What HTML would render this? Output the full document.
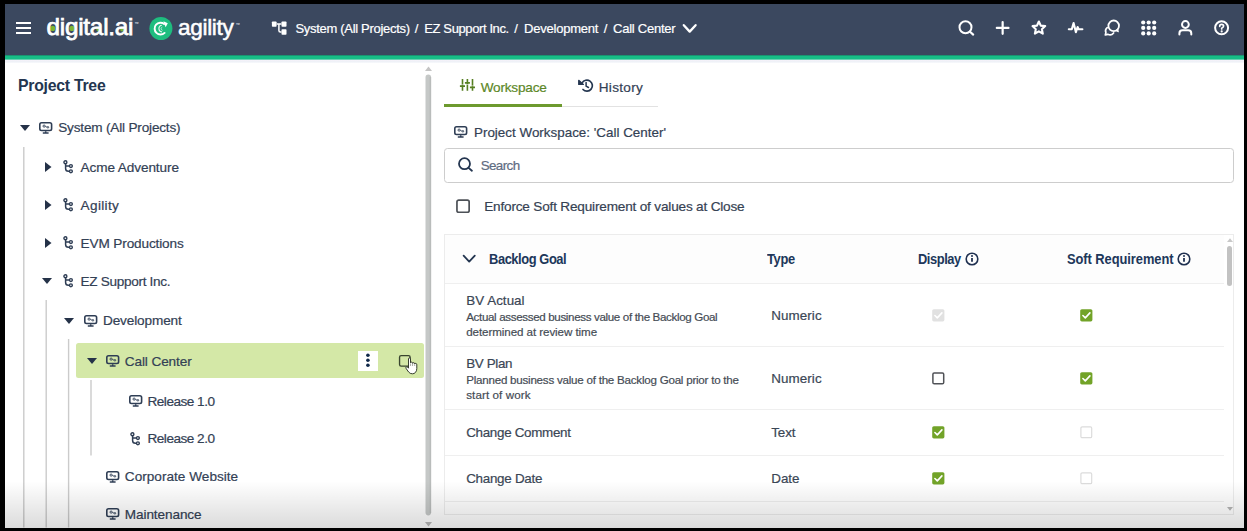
<!DOCTYPE html>
<html lang="en">
<head>
<meta charset="utf-8">
<title>Project Workspace - Call Center</title>
<style>
html,body{margin:0;padding:0;}
body{width:1247px;height:531px;background:#000;overflow:hidden;position:relative;font-family:"Liberation Sans",sans-serif;}
.a{position:absolute;}
.t{position:absolute;white-space:nowrap;line-height:1;-webkit-text-stroke:0.2px currentColor;}
.b{-webkit-text-stroke:0;}
.ag{-webkit-text-stroke:0.5px #fff;}
.dg{-webkit-text-stroke:0.75px #fff;}
svg{position:absolute;overflow:visible;}
.ln{position:absolute;width:1.6px;background:#d9d9d9;}
.hl{position:absolute;height:1px;background:#efefef;}
</style>
</head>
<body>
<!-- app canvas -->
<div class="a" style="left:5px;top:4px;width:1239px;height:523.5px;background:#fff;"></div>
<!-- header -->
<div class="a" style="left:5px;top:4px;width:1239px;height:52px;background:#3b485f;"></div>
<div class="a" style="left:5px;top:55px;width:1239px;height:5px;background:linear-gradient(to bottom,#1d6a5c 0,#17be87 1px,#17be87 4.2px,#f4f2f9 5px);"></div>
<div class="a" style="left:5px;top:60px;width:1239px;height:3.5px;background:linear-gradient(to bottom,#f6f2f9 0,#eef1f7 1.8px,#fff 3.5px);"></div>
<!-- hamburger -->
<div class="a" style="left:15.8px;top:22px;width:15.2px;height:2.2px;background:#fff;"></div>
<div class="a" style="left:15.8px;top:26.8px;width:15.2px;height:2.2px;background:#fff;"></div>
<div class="a" style="left:15.8px;top:31.5px;width:15.2px;height:2.2px;background:#fff;"></div>
<!-- logo dots -->
<svg style="left:40px;top:8px" width="100" height="42" viewBox="0 0 100 42" fill="#7db432">
 <circle cx="12.7" cy="20.4" r="2.6"/><circle cx="32" cy="20.4" r="2.6"/><circle cx="58.6" cy="21.4" r="2.2"/><circle cx="82.4" cy="21.4" r="2.2"/>
</svg>
<!-- agility logo circle -->
<svg style="left:149px;top:17px" width="24" height="24" viewBox="0 0 24 24">
 <circle cx="11.9" cy="11.5" r="11.5" fill="#1ebd7f"/>
 <path d="M15.2 7 A5.9 5.9 0 1 0 15.6 15.9" fill="none" stroke="#fff" stroke-width="1.9" stroke-linecap="round"/>
 <path d="M12.4 8.3 A3.4 3.4 0 0 0 12.6 14.9" fill="none" stroke="#fff" stroke-opacity="0.85" stroke-width="1.1" stroke-linecap="round"/>
 <path d="M13 10.2 A1.6 1.6 0 0 0 13.2 13.2" fill="none" stroke="#fff" stroke-opacity="0.7" stroke-width="0.9" stroke-linecap="round"/>
 <path d="M14.4 4.3 L18.8 6.3 L16.6 10.3 Z" fill="#fff"/>
</svg>
<!-- breadcrumb tree icon -->
<svg style="left:272px;top:21px" width="16" height="15" viewBox="0 0 16 15">
 <rect x="-0.1" y="0.4" width="4.7" height="5.4" rx="0.8" fill="#fff"/>
 <rect x="9.5" y="0.4" width="5" height="5.3" rx="0.8" fill="#fff"/>
 <rect x="9.5" y="8.3" width="5" height="5.5" rx="0.8" fill="#fff"/>
 <path d="M4.6 3 H9.5 M6.9 3 V9.6 Q6.9 11.1 8.4 11.1 H9.5" fill="none" stroke="#fff" stroke-width="1.5"/>
</svg>
<!-- breadcrumb chevron -->
<svg style="left:682px;top:23px" width="16" height="12" viewBox="0 0 16 12">
 <path d="M1.8 2.2 L7.7 8.6 L13.6 2.2" fill="none" stroke="#fff" stroke-width="2.3" stroke-linecap="round" stroke-linejoin="round"/>
</svg>
<!-- header right icons -->
<svg style="left:950px;top:12px" width="32" height="32" viewBox="0 0 32 32">
 <circle cx="15.5" cy="15.2" r="6" fill="none" stroke="#fff" stroke-width="2"/>
 <path d="M20 19.7 L23.2 22.6" stroke="#fff" stroke-width="2.1" stroke-linecap="round"/>
</svg>
<svg style="left:987px;top:12px" width="32" height="32" viewBox="0 0 32 32">
 <path d="M15.65 10 V21.8 M9.8 15.9 H21.5" stroke="#fff" stroke-width="2.2" stroke-linecap="round"/>
</svg>
<svg style="left:1023px;top:12px" width="32" height="32" viewBox="0 0 32 32">
 <path d="M15.85 9.5 L17.75 13.6 L22.2 14.1 L18.9 17.15 L19.8 21.6 L15.85 19.35 L11.9 21.6 L12.8 17.15 L9.5 14.1 L13.95 13.6 Z" fill="none" stroke="#fff" stroke-width="2.1" stroke-linejoin="round"/>
</svg>
<svg style="left:1060px;top:12px" width="32" height="32" viewBox="0 0 32 32">
 <path d="M8.8 17.2 H11.8 L13.6 11 L15.9 20.2 L17.6 15 L18.6 17.2 H22.4" fill="none" stroke="#fff" stroke-width="2.1" stroke-linejoin="round" stroke-linecap="round"/>
</svg>
<svg style="left:1096px;top:12px" width="32" height="32" viewBox="0 0 32 32">
 <path d="M11.2 15.6 A4.3 4.3 0 0 0 9.9 20.6 L9.3 22.9 L11.8 22.3 A4.7 4.7 0 0 0 17.6 21" fill="none" stroke="#fff" stroke-width="1.7" stroke-linejoin="round" stroke-linecap="round"/>
 <circle cx="17.7" cy="13.8" r="5.3" fill="#3b485f" stroke="#fff" stroke-width="1.8"/>
 <path d="M19.8 18.6 L22.4 20 L21.9 17 Z" fill="#fff" stroke="#fff" stroke-width="0.8" stroke-linejoin="round"/>
</svg>
<svg style="left:1133px;top:12px" width="32" height="32" viewBox="0 0 32 32" fill="#fff">
 <circle cx="10.2" cy="10.5" r="2.1"/><circle cx="15.7" cy="10.5" r="2.1"/><circle cx="21.2" cy="10.5" r="2.1"/>
 <circle cx="10.2" cy="15.9" r="2.1"/><circle cx="15.7" cy="15.9" r="2.1"/><circle cx="21.2" cy="15.9" r="2.1"/>
 <circle cx="10.2" cy="21.4" r="2.1"/><circle cx="15.7" cy="21.4" r="2.1"/><circle cx="21.2" cy="21.4" r="2.1"/>
</svg>
<svg style="left:1169px;top:12px" width="32" height="32" viewBox="0 0 32 32">
 <circle cx="16.4" cy="12.5" r="3.4" fill="none" stroke="#fff" stroke-width="2"/>
 <path d="M10.4 22.6 V21.4 Q10.4 18.3 13.5 18.3 H19.2 Q22.3 18.3 22.3 21.4 V22.6" fill="none" stroke="#fff" stroke-width="2" stroke-linecap="round"/>
</svg>
<svg style="left:1206px;top:12px" width="32" height="32" viewBox="0 0 32 32">
 <circle cx="15.6" cy="15.8" r="6.5" fill="none" stroke="#fff" stroke-width="2"/>
 <path d="M13.7 14.3 Q13.7 12.4 15.6 12.4 Q17.6 12.4 17.6 14.1 Q17.6 15.3 15.7 16.2 V16.9" fill="none" stroke="#fff" stroke-width="1.7" stroke-linecap="round"/>
 <circle cx="15.7" cy="19.4" r="1.1" fill="#fff"/>
</svg>

<div class="a" style="left:76px;top:343.4px;width:347.6px;height:34.7px;background:#d4e8a7;border-radius:2.5px;"></div>
<svg style="left:0;top:0" width="120" height="531" viewBox="0 0 120 531"><path d="M23.8 147 V527.5 M46.2 300 V527.5 M68.6 339 V527.5 M91 380 V455.5" stroke="#cbcbcb" stroke-width="1.4" fill="none"/></svg>
<svg style="left:19.6px;top:125.0px" width="10" height="6" viewBox="0 0 10 6"><path d="M0 0 H10 L5 6 Z" fill="#253248"/></svg>
<svg style="left:39.1px;top:121.7px" width="14" height="13" viewBox="0 0 14 13"><rect x="0.8" y="0.8" width="11.8" height="7.7" rx="1.7" fill="none" stroke="#2f3e55" stroke-width="1.6"/><path d="M6.7 9.2 V10.6 M3.8 11 H9.6" stroke="#2f3e55" stroke-width="1.5" fill="none"/><circle cx="5.1" cy="4.1" r="1.1" fill="none" stroke="#2f3e55" stroke-width="0.9"/><circle cx="8.9" cy="5.3" r="0.8" fill="none" stroke="#2f3e55" stroke-width="0.9"/><path d="M6.2 4.5 L8.1 5.1" stroke="#2f3e55" stroke-width="0.8"/></svg>
<svg style="left:45.0px;top:162.0px" width="7" height="10" viewBox="0 0 7 10"><path d="M0 0 L6.5 5 L0 10 Z" fill="#253248"/></svg>
<svg style="left:62.7px;top:160.4px" width="11" height="14" viewBox="0 0 11 14"><circle cx="2.4" cy="2.2" r="1.5" fill="none" stroke="#2f3e55" stroke-width="1.4"/><circle cx="7.9" cy="6.1" r="1.45" fill="none" stroke="#2f3e55" stroke-width="1.4"/><circle cx="7.9" cy="11.3" r="1.45" fill="none" stroke="#2f3e55" stroke-width="1.4"/><path d="M2.6 3.8 V8.5 Q2.6 11.3 5.4 11.3 H6.4 M2.6 6.1 H6.4" fill="none" stroke="#2f3e55" stroke-width="1.5"/></svg>
<svg style="left:45.0px;top:200.0px" width="7" height="10" viewBox="0 0 7 10"><path d="M0 0 L6.5 5 L0 10 Z" fill="#253248"/></svg>
<svg style="left:62.7px;top:198.4px" width="11" height="14" viewBox="0 0 11 14"><circle cx="2.4" cy="2.2" r="1.5" fill="none" stroke="#2f3e55" stroke-width="1.4"/><circle cx="7.9" cy="6.1" r="1.45" fill="none" stroke="#2f3e55" stroke-width="1.4"/><circle cx="7.9" cy="11.3" r="1.45" fill="none" stroke="#2f3e55" stroke-width="1.4"/><path d="M2.6 3.8 V8.5 Q2.6 11.3 5.4 11.3 H6.4 M2.6 6.1 H6.4" fill="none" stroke="#2f3e55" stroke-width="1.5"/></svg>
<svg style="left:45.0px;top:237.8px" width="7" height="10" viewBox="0 0 7 10"><path d="M0 0 L6.5 5 L0 10 Z" fill="#253248"/></svg>
<svg style="left:62.7px;top:236.2px" width="11" height="14" viewBox="0 0 11 14"><circle cx="2.4" cy="2.2" r="1.5" fill="none" stroke="#2f3e55" stroke-width="1.4"/><circle cx="7.9" cy="6.1" r="1.45" fill="none" stroke="#2f3e55" stroke-width="1.4"/><circle cx="7.9" cy="11.3" r="1.45" fill="none" stroke="#2f3e55" stroke-width="1.4"/><path d="M2.6 3.8 V8.5 Q2.6 11.3 5.4 11.3 H6.4 M2.6 6.1 H6.4" fill="none" stroke="#2f3e55" stroke-width="1.5"/></svg>
<svg style="left:41.7px;top:277.8px" width="10" height="6" viewBox="0 0 10 6"><path d="M0 0 H10 L5 6 Z" fill="#253248"/></svg>
<svg style="left:62.7px;top:274.4px" width="11" height="14" viewBox="0 0 11 14"><circle cx="2.4" cy="2.2" r="1.5" fill="none" stroke="#2f3e55" stroke-width="1.4"/><circle cx="7.9" cy="6.1" r="1.45" fill="none" stroke="#2f3e55" stroke-width="1.4"/><circle cx="7.9" cy="11.3" r="1.45" fill="none" stroke="#2f3e55" stroke-width="1.4"/><path d="M2.6 3.8 V8.5 Q2.6 11.3 5.4 11.3 H6.4 M2.6 6.1 H6.4" fill="none" stroke="#2f3e55" stroke-width="1.5"/></svg>
<svg style="left:64.2px;top:317.6px" width="10" height="6" viewBox="0 0 10 6"><path d="M0 0 H10 L5 6 Z" fill="#253248"/></svg>
<svg style="left:83.7px;top:314.8px" width="14" height="13" viewBox="0 0 14 13"><rect x="0.8" y="0.8" width="11.8" height="7.7" rx="1.7" fill="none" stroke="#2f3e55" stroke-width="1.6"/><path d="M6.7 9.2 V10.6 M3.8 11 H9.6" stroke="#2f3e55" stroke-width="1.5" fill="none"/><circle cx="5.1" cy="4.1" r="1.1" fill="none" stroke="#2f3e55" stroke-width="0.9"/><circle cx="8.9" cy="5.3" r="0.8" fill="none" stroke="#2f3e55" stroke-width="0.9"/><path d="M6.2 4.5 L8.1 5.1" stroke="#2f3e55" stroke-width="0.8"/></svg>
<svg style="left:86.7px;top:358.0px" width="10" height="6" viewBox="0 0 10 6"><path d="M0 0 H10 L5 6 Z" fill="#253248"/></svg>
<svg style="left:106.2px;top:354.8px" width="14" height="13" viewBox="0 0 14 13"><rect x="0.8" y="0.8" width="11.8" height="7.7" rx="1.7" fill="none" stroke="#2f3e55" stroke-width="1.6"/><path d="M6.7 9.2 V10.6 M3.8 11 H9.6" stroke="#2f3e55" stroke-width="1.5" fill="none"/><circle cx="5.1" cy="4.1" r="1.1" fill="none" stroke="#2f3e55" stroke-width="0.9"/><circle cx="8.9" cy="5.3" r="0.8" fill="none" stroke="#2f3e55" stroke-width="0.9"/><path d="M6.2 4.5 L8.1 5.1" stroke="#2f3e55" stroke-width="0.8"/></svg>
<svg style="left:128.8px;top:395.4px" width="14" height="13" viewBox="0 0 14 13"><rect x="0.8" y="0.8" width="11.8" height="7.7" rx="1.7" fill="none" stroke="#2f3e55" stroke-width="1.6"/><path d="M6.7 9.2 V10.6 M3.8 11 H9.6" stroke="#2f3e55" stroke-width="1.5" fill="none"/><circle cx="5.1" cy="4.1" r="1.1" fill="none" stroke="#2f3e55" stroke-width="0.9"/><circle cx="8.9" cy="5.3" r="0.8" fill="none" stroke="#2f3e55" stroke-width="0.9"/><path d="M6.2 4.5 L8.1 5.1" stroke="#2f3e55" stroke-width="0.8"/></svg>
<svg style="left:129.6px;top:431.8px" width="11" height="14" viewBox="0 0 11 14"><circle cx="2.4" cy="2.2" r="1.5" fill="none" stroke="#2f3e55" stroke-width="1.4"/><circle cx="7.9" cy="6.1" r="1.45" fill="none" stroke="#2f3e55" stroke-width="1.4"/><circle cx="7.9" cy="11.3" r="1.45" fill="none" stroke="#2f3e55" stroke-width="1.4"/><path d="M2.6 3.8 V8.5 Q2.6 11.3 5.4 11.3 H6.4 M2.6 6.1 H6.4" fill="none" stroke="#2f3e55" stroke-width="1.5"/></svg>
<svg style="left:106.2px;top:470.8px" width="14" height="13" viewBox="0 0 14 13"><rect x="0.8" y="0.8" width="11.8" height="7.7" rx="1.7" fill="none" stroke="#2f3e55" stroke-width="1.6"/><path d="M6.7 9.2 V10.6 M3.8 11 H9.6" stroke="#2f3e55" stroke-width="1.5" fill="none"/><circle cx="5.1" cy="4.1" r="1.1" fill="none" stroke="#2f3e55" stroke-width="0.9"/><circle cx="8.9" cy="5.3" r="0.8" fill="none" stroke="#2f3e55" stroke-width="0.9"/><path d="M6.2 4.5 L8.1 5.1" stroke="#2f3e55" stroke-width="0.8"/></svg>
<svg style="left:106.2px;top:508.2px" width="14" height="13" viewBox="0 0 14 13"><rect x="0.8" y="0.8" width="11.8" height="7.7" rx="1.7" fill="none" stroke="#2f3e55" stroke-width="1.6"/><path d="M6.7 9.2 V10.6 M3.8 11 H9.6" stroke="#2f3e55" stroke-width="1.5" fill="none"/><circle cx="5.1" cy="4.1" r="1.1" fill="none" stroke="#2f3e55" stroke-width="0.9"/><circle cx="8.9" cy="5.3" r="0.8" fill="none" stroke="#2f3e55" stroke-width="0.9"/><path d="M6.2 4.5 L8.1 5.1" stroke="#2f3e55" stroke-width="0.8"/></svg>
<div class="a" style="left:358px;top:351.1px;width:20px;height:19.7px;background:#fff;"></div>
<svg style="left:358px;top:351px" width="20" height="20" viewBox="0 0 20 20" fill="#10294a"><circle cx="9.9" cy="4.2" r="1.8"/><circle cx="9.9" cy="9.3" r="1.8"/><circle cx="9.9" cy="14.3" r="1.8"/></svg>
<svg style="left:398px;top:354px" width="22" height="22" viewBox="0 0 22 22"><rect x="1.55" y="1.55" width="10.6" height="10.6" rx="1.6" fill="none" stroke="#39452f" stroke-width="1.35"/><path d="M10.5 5 Q10.5 3.9 11.5 3.9 Q12.5 3.9 12.5 5 V8.8 Q12.8 8 13.7 8.1 Q14.6 8.2 14.6 9.4 Q14.9 8.6 15.8 8.7 Q16.7 8.8 16.7 9.9 Q17 9.2 17.9 9.4 Q18.8 9.6 18.8 10.7 V14.5 Q18.8 17 17.4 18.5 Q16.2 19.8 14.4 19.8 Q12 19.8 10.6 18 L8.2 14.6 Q7.4 13.4 8.3 12.9 Q9.2 12.5 10 13.5 L10.5 14.2 Z" fill="#fff" stroke="#2c3426" stroke-width="0.95" stroke-linejoin="round"/><path d="M12.6 9.4 V12 M14.6 9.8 V12 M16.7 10.2 V12" stroke="#6b7466" stroke-width="0.6" fill="none"/></svg>
<svg style="left:420px;top:70px" width="16" height="450" viewBox="0 0 16 450"><rect x="5.5" y="4.6" width="5.6" height="440.8" rx="2.8" fill="#c5c8c7"/><rect x="9.6" y="7" width="1.5" height="436" fill="#b9bcbb"/></svg>
<svg style="left:425px;top:65.5px" width="7" height="5" viewBox="0 0 7 5"><path d="M0 5 L3.5 0.5 L7 5 Z" fill="#c4c4c4"/></svg>
<svg style="left:424.8px;top:521.8px" width="7" height="5" viewBox="0 0 7 5"><path d="M0 0 L3.5 4.5 L7 0 Z" fill="#b8b8b8"/></svg>
<div class="a" style="left:444px;top:105.6px;width:214px;height:1.1px;background:#e2e2e2;"></div>
<div class="a" style="left:444px;top:103.8px;width:118px;height:3px;background:#6d9a2e;"></div>
<svg style="left:459px;top:78px" width="17" height="14" viewBox="0 0 17 14"><path d="M3.5 1.1 V12.7 M8.4 1.1 V12.7 M13.5 1.1 V12.7" stroke="#567f22" stroke-width="1.6" fill="none"/><path d="M2.4 6.8 H4.6 M7.3 6.4 H9.5 M12.4 7.9 H14.6" stroke="#fff" stroke-width="0.6" fill="none"/><path d="M0.9 8.2 H6 M5.9 4.9 H10.9 M10.9 9.3 H16" stroke="#567f22" stroke-width="1.7" fill="none"/></svg>
<svg style="left:577px;top:78px" width="17" height="15" viewBox="0 0 17 15"><path d="M5.1 4.9 A5.5 5.5 0 1 1 6 11.5" fill="none" stroke="#243650" stroke-width="1.7" stroke-linecap="round"/><path d="M1.7 2.3 V6.5 H6.4 Z" fill="#243650" stroke="#243650" stroke-width="1.2" stroke-linejoin="round"/><path d="M9.1 4.6 V8.2 L11.5 9.5" fill="none" stroke="#243650" stroke-width="1.5" stroke-linecap="round" stroke-linejoin="round"/></svg>
<svg style="left:454.2px;top:125.9px" width="14" height="13" viewBox="0 0 14 13"><rect x="0.8" y="0.8" width="11.8" height="7.7" rx="1.7" fill="none" stroke="#2f3e55" stroke-width="1.6"/><path d="M6.7 9.2 V10.6 M3.8 11 H9.6" stroke="#2f3e55" stroke-width="1.5" fill="none"/><circle cx="5.1" cy="4.1" r="1.1" fill="none" stroke="#2f3e55" stroke-width="0.9"/><circle cx="8.9" cy="5.3" r="0.8" fill="none" stroke="#2f3e55" stroke-width="0.9"/><path d="M6.2 4.5 L8.1 5.1" stroke="#2f3e55" stroke-width="0.8"/></svg>
<div class="a" style="left:444px;top:148.4px;width:787.5px;height:33px;border:1px solid #cdcdcd;border-radius:3.5px;background:#fff;"></div>
<svg style="left:457px;top:156px" width="18" height="18" viewBox="0 0 18 18"><circle cx="7.5" cy="7.7" r="5.5" fill="none" stroke="#243650" stroke-width="1.8"/><path d="M11.6 11.9 L14.9 14.7" stroke="#243650" stroke-width="1.9" stroke-linecap="round"/></svg>
<svg style="left:456px;top:199px" width="15" height="15" viewBox="0 0 15 15"><rect x="0.95" y="1.05" width="12.2" height="12.2" rx="1.8" fill="#fff" stroke="#4d5157" stroke-width="1.7"/></svg>
<div class="a" style="left:444px;top:233.6px;width:787.6px;height:279.6px;border:1px solid #ececec;background:#fff;"></div>
<div class="a" style="left:445px;top:235px;width:779px;height:48px;background:#fdfdfd;"></div>
<div class="hl" style="left:445px;top:283.3px;width:779px;"></div>
<div class="hl" style="left:445px;top:346.2px;width:779px;"></div>
<div class="hl" style="left:445px;top:409.0px;width:779px;"></div>
<div class="hl" style="left:445px;top:455.3px;width:779px;"></div>
<div class="hl" style="left:445px;top:501.2px;width:779px;"></div>
<svg style="left:462px;top:254px" width="15" height="10" viewBox="0 0 15 10"><path d="M1.6 1.6 L7.2 7.6 L12.8 1.6" fill="none" stroke="#243650" stroke-width="1.8" stroke-linecap="round" stroke-linejoin="round"/></svg>
<svg style="left:964.4px;top:250.9px" width="16" height="16" viewBox="0 0 16 16"><circle cx="8" cy="8" r="5.8" fill="none" stroke="#1f3050" stroke-width="1.6"/><path d="M8 6.9 V10.7" stroke="#1f3050" stroke-width="1.8"/><circle cx="8" cy="5.1" r="1" fill="#1f3050"/></svg>
<svg style="left:1176.1px;top:250.9px" width="16" height="16" viewBox="0 0 16 16"><circle cx="8" cy="8" r="5.8" fill="none" stroke="#1f3050" stroke-width="1.6"/><path d="M8 6.9 V10.7" stroke="#1f3050" stroke-width="1.8"/><circle cx="8" cy="5.1" r="1" fill="#1f3050"/></svg>
<div class="a" style="left:1227px;top:246px;width:4.8px;height:40.4px;background:#c2c2c2;border-radius:2.5px;"></div>
<svg style="left:1226.6px;top:237.6px" width="6" height="4" viewBox="0 0 6 4"><path d="M0 4 L3 0.3 L6 4 Z" fill="#c8c8c8"/></svg>
<svg style="left:1226.6px;top:506.5px" width="6" height="4" viewBox="0 0 6 4"><path d="M0 0 L3 3.7 L6 0 Z" fill="#b4b4b4"/></svg>
<svg style="left:931.7px;top:309.0px" width="13" height="13" viewBox="0 0 13 13"><rect x="0.2" y="0.2" width="12.2" height="12.2" rx="1.6" fill="#e1e1e1"/><path d="M2.9 6.5 L5.3 8.9 L9.9 3.9" fill="none" stroke="#fff" stroke-width="1.6" stroke-linecap="round" stroke-linejoin="round"/></svg>
<svg style="left:1080.1px;top:309.0px" width="13" height="13" viewBox="0 0 13 13"><rect x="0.2" y="0.2" width="12.2" height="12.2" rx="1.6" fill="#72a328"/><path d="M2.9 6.5 L5.3 8.9 L9.9 3.9" fill="none" stroke="#fff" stroke-width="1.6" stroke-linecap="round" stroke-linejoin="round"/></svg>
<svg style="left:931.7px;top:372.0px" width="13" height="13" viewBox="0 0 13 13"><rect x="0.9" y="0.9" width="10.8" height="10.8" rx="1.3" fill="#fff" stroke="#505257" stroke-width="1.5"/></svg>
<svg style="left:1080.1px;top:372.0px" width="13" height="13" viewBox="0 0 13 13"><rect x="0.2" y="0.2" width="12.2" height="12.2" rx="1.6" fill="#72a328"/><path d="M2.9 6.5 L5.3 8.9 L9.9 3.9" fill="none" stroke="#fff" stroke-width="1.6" stroke-linecap="round" stroke-linejoin="round"/></svg>
<svg style="left:931.7px;top:426.0px" width="13" height="13" viewBox="0 0 13 13"><rect x="0.2" y="0.2" width="12.2" height="12.2" rx="1.6" fill="#72a328"/><path d="M2.9 6.5 L5.3 8.9 L9.9 3.9" fill="none" stroke="#fff" stroke-width="1.6" stroke-linecap="round" stroke-linejoin="round"/></svg>
<svg style="left:1080.1px;top:426.0px" width="13" height="13" viewBox="0 0 13 13"><rect x="0.9" y="0.9" width="10.8" height="10.8" rx="1.3" fill="#fff" stroke="#dcdcdc" stroke-width="1.2"/></svg>
<svg style="left:931.7px;top:472.0px" width="13" height="13" viewBox="0 0 13 13"><rect x="0.2" y="0.2" width="12.2" height="12.2" rx="1.6" fill="#72a328"/><path d="M2.9 6.5 L5.3 8.9 L9.9 3.9" fill="none" stroke="#fff" stroke-width="1.6" stroke-linecap="round" stroke-linejoin="round"/></svg>
<svg style="left:1080.1px;top:472.0px" width="13" height="13" viewBox="0 0 13 13"><rect x="0.9" y="0.9" width="10.8" height="10.8" rx="1.3" fill="#fff" stroke="#dcdcdc" stroke-width="1.2"/></svg>
<span class="t " style="left:295.4px;top:22.30px;font-size:13.0px;font-weight:400;color:#ffffff;letter-spacing:-0.302px;">System (All Projects)</span>
<span class="t " style="left:414.8px;top:22.30px;font-size:13.0px;font-weight:400;color:#ffffff;letter-spacing:0.000px;">/</span>
<span class="t " style="left:424.3px;top:22.30px;font-size:13.0px;font-weight:400;color:#ffffff;letter-spacing:-0.388px;">EZ Support Inc.</span>
<span class="t " style="left:514.2px;top:22.30px;font-size:13.0px;font-weight:400;color:#ffffff;letter-spacing:0.000px;">/</span>
<span class="t " style="left:524.0px;top:22.30px;font-size:13.0px;font-weight:400;color:#ffffff;letter-spacing:-0.221px;">Development</span>
<span class="t " style="left:603.8px;top:22.30px;font-size:13.0px;font-weight:400;color:#ffffff;letter-spacing:0.000px;">/</span>
<span class="t " style="left:613.0px;top:22.30px;font-size:13.0px;font-weight:400;color:#ffffff;letter-spacing:-0.243px;">Call Center</span>
<span class="t dg" style="left:46.5px;top:14.65px;font-size:24.3px;font-weight:400;color:#ffffff;letter-spacing:-0.240px;">digital.ai</span>
<span class="t " style="left:134.3px;top:21.70px;font-size:4.2px;font-weight:400;color:#aeb5c2;letter-spacing:0.000px;">™</span>
<span class="t " style="left:235.6px;top:22.70px;font-size:4.2px;font-weight:400;color:#aeb5c2;letter-spacing:0.000px;">™</span>
<span class="t ag" style="left:178.1px;top:16.50px;font-size:22.6px;font-weight:400;color:#ffffff;letter-spacing:-0.361px;">agility</span>
<span class="t b" style="left:18.3px;top:77.30px;font-size:17.0px;font-weight:700;color:#243650;letter-spacing:-0.275px;transform:scaleX(0.930);transform-origin:0 0;">Project Tree</span>
<span class="t " style="left:58.2px;top:121.00px;font-size:13.6px;font-weight:400;color:#334155;letter-spacing:-0.187px;">System (All Projects)</span>
<span class="t " style="left:80.6px;top:161.00px;font-size:13.6px;font-weight:400;color:#334155;letter-spacing:-0.104px;">Acme Adventure</span>
<span class="t " style="left:80.6px;top:199.00px;font-size:13.6px;font-weight:400;color:#334155;letter-spacing:0.339px;">Agility</span>
<span class="t " style="left:80.6px;top:237.00px;font-size:13.6px;font-weight:400;color:#334155;letter-spacing:-0.131px;">EVM Productions</span>
<span class="t " style="left:80.6px;top:275.00px;font-size:13.6px;font-weight:400;color:#334155;letter-spacing:-0.325px;">EZ Support Inc.</span>
<span class="t " style="left:103.0px;top:314.00px;font-size:13.6px;font-weight:400;color:#334155;letter-spacing:-0.131px;">Development</span>
<span class="t " style="left:124.8px;top:355.00px;font-size:13.6px;font-weight:400;color:#334155;letter-spacing:-0.110px;">Call Center</span>
<span class="t " style="left:147.5px;top:395.00px;font-size:13.6px;font-weight:400;color:#334155;letter-spacing:-0.506px;">Release 1.0</span>
<span class="t " style="left:147.5px;top:432.00px;font-size:13.6px;font-weight:400;color:#334155;letter-spacing:-0.506px;">Release 2.0</span>
<span class="t " style="left:124.8px;top:470.00px;font-size:13.6px;font-weight:400;color:#334155;letter-spacing:0.019px;">Corporate Website</span>
<span class="t " style="left:124.8px;top:508.00px;font-size:13.6px;font-weight:400;color:#334155;letter-spacing:-0.104px;">Maintenance</span>
<span class="t " style="left:480.7px;top:81.00px;font-size:13.6px;font-weight:400;color:#5c8727;letter-spacing:-0.206px;">Workspace</span>
<span class="t " style="left:598.7px;top:81.00px;font-size:13.6px;font-weight:400;color:#334155;letter-spacing:0.301px;">History</span>
<span class="t " style="left:474.0px;top:126.10px;font-size:13.4px;font-weight:400;color:#334154;letter-spacing:0.011px;">Project Workspace: 'Call Center'</span>
<span class="t " style="left:480.7px;top:159.10px;font-size:13.4px;font-weight:400;color:#5f6c82;letter-spacing:-0.607px;">Search</span>
<span class="t " style="left:484.2px;top:200.00px;font-size:13.6px;font-weight:400;color:#364253;letter-spacing:-0.185px;">Enforce Soft Requirement of values at Close</span>
<span class="t b" style="left:488.8px;top:252.30px;font-size:14.0px;font-weight:700;color:#20375a;letter-spacing:-0.456px;transform:scaleX(0.920);transform-origin:0 0;">Backlog Goal</span>
<span class="t b" style="left:767.2px;top:252.30px;font-size:14.0px;font-weight:700;color:#20375a;letter-spacing:-0.366px;transform:scaleX(0.920);transform-origin:0 0;">Type</span>
<span class="t b" style="left:917.7px;top:252.30px;font-size:14.0px;font-weight:700;color:#20375a;letter-spacing:-0.476px;transform:scaleX(0.920);transform-origin:0 0;">Display</span>
<span class="t b" style="left:1067.2px;top:252.30px;font-size:14.0px;font-weight:700;color:#20375a;letter-spacing:-0.062px;transform:scaleX(0.920);transform-origin:0 0;">Soft Requirement</span>
<span class="t " style="left:466.2px;top:294.10px;font-size:13.4px;font-weight:400;color:#3a4655;letter-spacing:0.042px;">BV Actual</span>
<span class="t " style="left:466.2px;top:311.00px;font-size:11.6px;font-weight:400;color:#454c55;letter-spacing:-0.352px;">Actual assessed business value of the Backlog Goal</span>
<span class="t " style="left:466.2px;top:326.00px;font-size:11.6px;font-weight:400;color:#454c55;letter-spacing:-0.077px;">determined at review time</span>
<span class="t " style="left:771.3px;top:309.10px;font-size:13.4px;font-weight:400;color:#3a4655;letter-spacing:0.073px;">Numeric</span>
<span class="t " style="left:466.2px;top:357.10px;font-size:13.4px;font-weight:400;color:#3a4655;letter-spacing:-0.348px;">BV Plan</span>
<span class="t " style="left:466.2px;top:374.00px;font-size:11.6px;font-weight:400;color:#454c55;letter-spacing:-0.235px;">Planned business value of the Backlog Goal prior to the</span>
<span class="t " style="left:466.2px;top:389.00px;font-size:11.6px;font-weight:400;color:#454c55;letter-spacing:0.097px;">start of work</span>
<span class="t " style="left:771.3px;top:372.10px;font-size:13.4px;font-weight:400;color:#3a4655;letter-spacing:0.073px;">Numeric</span>
<span class="t " style="left:466.2px;top:426.10px;font-size:13.4px;font-weight:400;color:#3a4655;letter-spacing:-0.298px;">Change Comment</span>
<span class="t " style="left:771.3px;top:426.10px;font-size:13.4px;font-weight:400;color:#3a4655;letter-spacing:-0.121px;">Text</span>
<span class="t " style="left:466.2px;top:472.10px;font-size:13.4px;font-weight:400;color:#3a4655;letter-spacing:-0.272px;">Change Date</span>
<span class="t " style="left:771.3px;top:472.10px;font-size:13.4px;font-weight:400;color:#3a4655;letter-spacing:-0.032px;">Date</span>
<!-- bottom shade -->
<div class="a" style="left:5px;top:481px;width:1239px;height:46.5px;background:linear-gradient(to bottom,rgba(0,0,0,0),rgba(0,0,0,0.07) 50%,rgba(0,0,0,0.14));"></div>
</body>
</html>
